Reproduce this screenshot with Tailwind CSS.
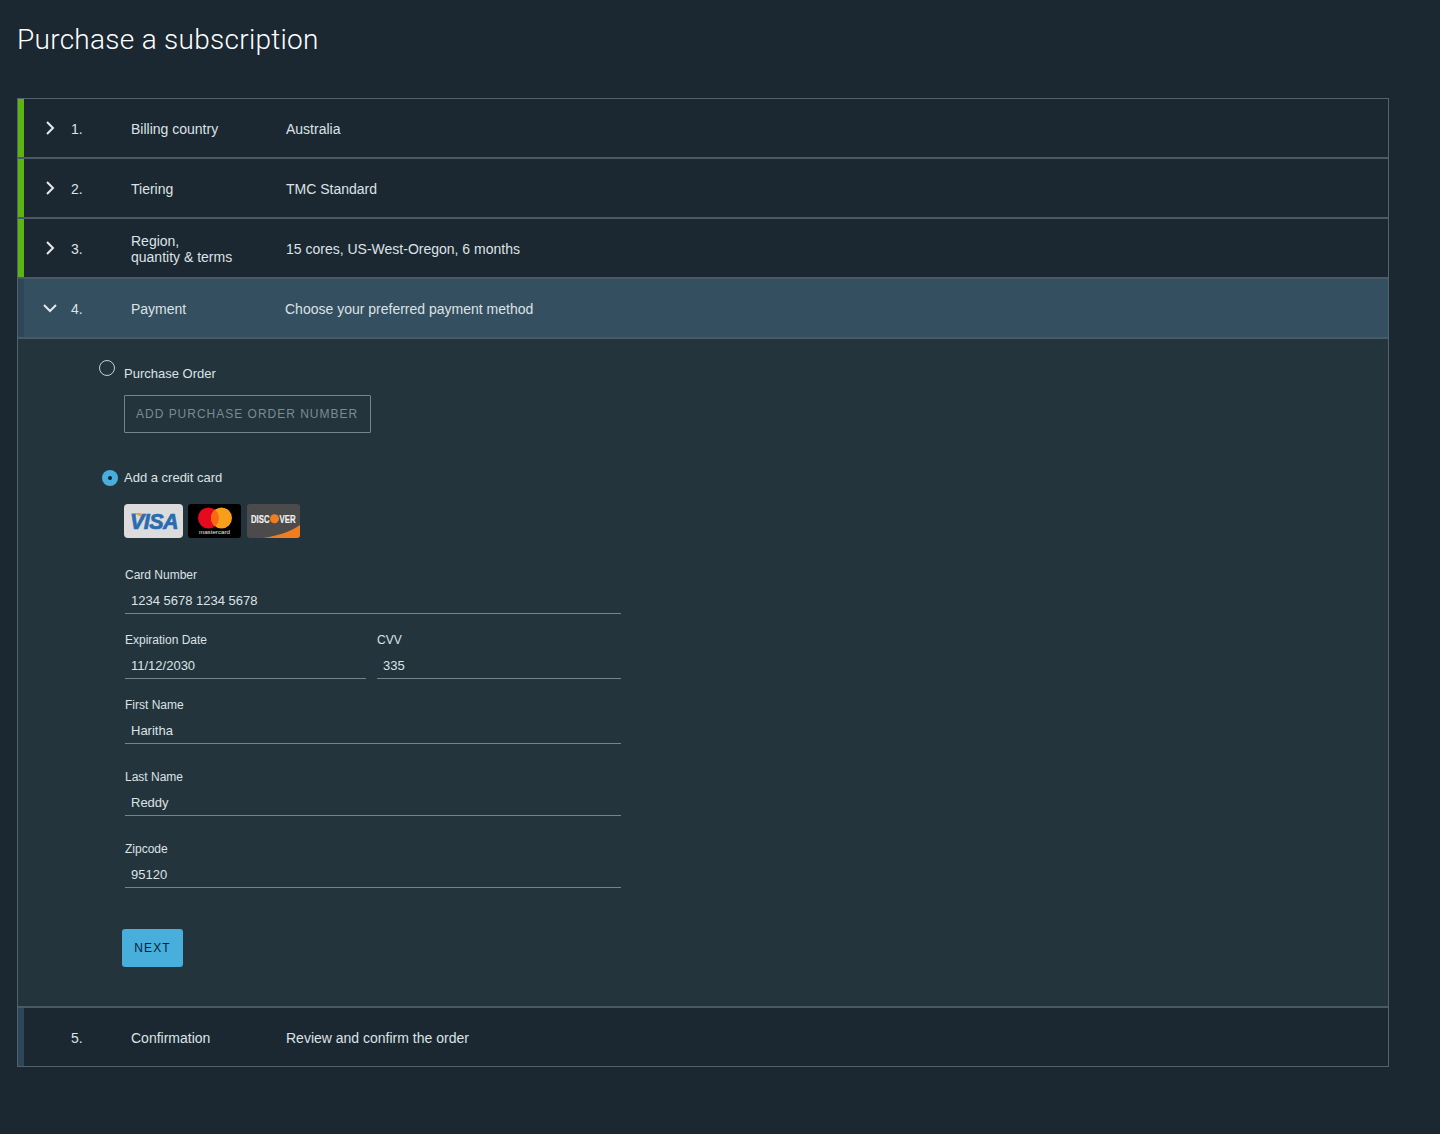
<!DOCTYPE html>
<html lang="en">

<head>
  <meta charset="UTF-8" />
  <title>Purchase a subscription</title>
  <script src="https://cdn.jsdelivr.net/npm/@tailwindcss/browser@4"></script>
</head>

<body class="bg-[#1b2832] font-['Liberation_Sans',Arial,sans-serif] text-[#dde2e5] h-[1134px] overflow-hidden">
  <div class="pl-[17px] pr-[51px]">
    <h1 class="h-[98px] pt-[22px] font-['Roboto',sans-serif] font-light text-[28px] leading-[36px] tracking-[0.28px] text-white">Purchase a subscription</h1>

    <div class="border border-[#52636d]">
      <!-- step 1 -->
      <div class="flex h-[60px] border-b-2 border-[#4a5a64] text-[14px]">
        <div class="w-[6px] bg-[#5cb314]"></div>
        <div class="flex flex-1 pt-[2px]">
          <div class="w-[47px] flex items-center pl-[21px]">
            <svg class="w-[10px] h-[14px] -mt-[2px]" viewBox="0 0 10 14" fill="none" stroke="#e6e9eb" stroke-width="2"><path d="M2 1l6 6-6 6" /></svg>
          </div>
          <div class="w-[60px] flex items-center">1.</div>
          <div class="w-[155px] flex items-center">Billing country</div>
          <div class="flex items-center">Australia</div>
        </div>
      </div>
      <!-- step 2 -->
      <div class="flex h-[60px] border-b-2 border-[#4a5a64] text-[14px]">
        <div class="w-[6px] bg-[#5cb314]"></div>
        <div class="flex flex-1 pt-[2px]">
          <div class="w-[47px] flex items-center pl-[21px]">
            <svg class="w-[10px] h-[14px] -mt-[2px]" viewBox="0 0 10 14" fill="none" stroke="#e6e9eb" stroke-width="2"><path d="M2 1l6 6-6 6" /></svg>
          </div>
          <div class="w-[60px] flex items-center">2.</div>
          <div class="w-[155px] flex items-center">Tiering</div>
          <div class="flex items-center">TMC Standard</div>
        </div>
      </div>
      <!-- step 3 -->
      <div class="flex h-[60px] border-b-2 border-[#4a5a64] text-[14px]">
        <div class="w-[6px] bg-[#5cb314]"></div>
        <div class="flex flex-1 pt-[2px]">
          <div class="w-[47px] flex items-center pl-[21px]">
            <svg class="w-[10px] h-[14px] -mt-[2px]" viewBox="0 0 10 14" fill="none" stroke="#e6e9eb" stroke-width="2"><path d="M2 1l6 6-6 6" /></svg>
          </div>
          <div class="w-[60px] flex items-center">3.</div>
          <div class="w-[155px] flex items-center leading-[16px]">Region,<br />quantity &amp; terms</div>
          <div class="flex items-center">15 cores, US-West-Oregon, 6 months</div>
        </div>
      </div>
      <!-- step 4 -->
      <div class="flex h-[60px] border-b-2 border-[#4a5a64] bg-[#334f60] text-[14px]">
        <div class="w-[6px] bg-[#2d4658]"></div>
        <div class="flex flex-1 pt-[2px]">
          <div class="w-[47px] flex items-center pl-[19px]">
            <svg class="w-[14px] h-[10px] -mt-[3px]" viewBox="0 0 14 10" fill="none" stroke="#e6e9eb" stroke-width="2"><path d="M1 2l6 6 6-6" /></svg>
          </div>
          <div class="w-[60px] flex items-center">4.</div>
          <div class="w-[154px] flex items-center">Payment</div>
          <div class="flex items-center">Choose your preferred payment method</div>
        </div>
      </div>

      <!-- payment panel -->
      <div class="h-[667px] bg-[#23343d] pl-[81px] pt-[21px] text-[13px]">
        <div class="flex">
          <div class="w-[16px] h-[16px] rounded-full border border-[#c9d0d4]"></div>
          <div class="ml-[9px] mt-[6px] leading-[16px]">Purchase Order</div>
        </div>
        <div class="ml-[25px] mt-[13px] w-[247px] h-[38px] border border-[#75858e] rounded-[1px] flex items-center pl-[11px] text-[12px] tracking-[0.99px] text-[#7b8a93]">ADD PURCHASE ORDER NUMBER</div>

        <div class="flex items-center mt-[37px] ml-[3px]">
          <div class="w-[16px] h-[16px] rounded-full bg-[#48aedc] flex items-center justify-center">
            <div class="w-[4px] h-[4px] rounded-full bg-[#10222c]"></div>
          </div>
          <div class="ml-[6px] leading-[16px]">Add a credit card</div>
        </div>

        <!-- card logos -->
        <div class="flex ml-[25px] mt-[18px] h-[34px]">
          <svg class="w-[59px] h-[34px]" viewBox="0 0 59 34">
            <rect width="59" height="34" rx="4" fill="#dcdcdc" />
            <path d="M6 9h10c2 0 3 1 3.500 3l1 5c-2-4-7-7-14.500-8z" fill="#e5a03a" />
            <text x="30" y="24.500" text-anchor="middle" font-family="Liberation Sans" font-weight="700" font-style="italic" font-size="21.500" letter-spacing="-0.5" fill="#2a6cb0" stroke="#2a6cb0" stroke-width="0.7">VISA</text>
          </svg>
          <svg class="w-[53px] h-[34px] ml-[5px]" viewBox="0 0 53 34">
            <rect width="53" height="34" rx="3" fill="#000" />
            <circle cx="20.500" cy="14" r="10.500" fill="#e60a1f" />
            <circle cx="33.500" cy="14" r="10.500" fill="#f79e1b" />
            <path d="M27 5.800a10.500 10.500 0 0 1 0 16.400a10.500 10.500 0 0 1 0-16.400z" fill="#fb6a12" />
            <text x="26.500" y="30" text-anchor="middle" font-family="Liberation Sans" font-size="6.200" fill="#e8e8e8">mastercard</text>
          </svg>
          <svg class="w-[53px] h-[34px] ml-[6px]" viewBox="0 0 53 34">
            <rect width="53" height="34" rx="3" fill="#4b4b4b" />
            <path d="M16 34c14-2 27-6 37-13v10a3 3 0 0 1-3 3z" fill="#f07e1e" />
            <text x="4" y="18.500" font-family="Liberation Sans" font-weight="700" font-size="10.500" textLength="18.500" lengthAdjust="spacingAndGlyphs" fill="#f1f1f1" stroke="#f1f1f1" stroke-width="0.2">DISC</text>
            <circle cx="27.500" cy="14.700" r="4.500" fill="#f07e1e" />
            <text x="32.500" y="18.500" font-family="Liberation Sans" font-weight="700" font-size="10.500" textLength="16" lengthAdjust="spacingAndGlyphs" fill="#f1f1f1" stroke="#f1f1f1" stroke-width="0.2">VER</text>
          </svg>
        </div>

        <!-- card fields -->
        <div class="ml-[26px] mt-[29px] w-[496px] text-[12px]">
          <div class="h-[65px]">
            <div class="leading-[16px]">Card Number</div>
            <div class="mt-[6px] h-[25px] pl-[6px] border-b border-[#75848c] text-[13px] leading-[24px]">1234 5678 1234 5678</div>
          </div>
          <div class="flex gap-[11px] h-[65px]">
            <div class="w-[241px]">
              <div class="leading-[16px]">Expiration Date</div>
              <div class="mt-[6px] h-[25px] pl-[6px] border-b border-[#75848c] text-[13px] leading-[24px]">11/12/2030</div>
            </div>
            <div class="w-[244px]">
              <div class="leading-[16px]">CVV</div>
              <div class="mt-[6px] h-[25px] pl-[6px] border-b border-[#75848c] text-[13px] leading-[24px]">335</div>
            </div>
          </div>
          <div class="h-[72px]">
            <div class="leading-[16px]">First Name</div>
            <div class="mt-[6px] h-[25px] pl-[6px] border-b border-[#75848c] text-[13px] leading-[24px]">Haritha</div>
          </div>
          <div class="h-[72px]">
            <div class="leading-[16px]">Last Name</div>
            <div class="mt-[6px] h-[25px] pl-[6px] border-b border-[#75848c] text-[13px] leading-[24px]">Reddy</div>
          </div>
          <div class="h-[88px]">
            <div class="leading-[16px]">Zipcode</div>
            <div class="mt-[6px] h-[25px] pl-[6px] border-b border-[#75848c] text-[13px] leading-[24px]">95120</div>
          </div>
        </div>

        <button class="ml-[23px] w-[61px] h-[38px] rounded-[3px] bg-[#48aedc] text-[#0a2233] text-[12px] tracking-[1.1px]">NEXT</button>
      </div>

      <!-- step 5 -->
      <div class="flex h-[60px] border-t-2 border-[#4a5a64] text-[14px]">
        <div class="w-[6px] bg-[#2d4658]"></div>
        <div class="flex flex-1 pt-[2px]">
          <div class="w-[47px]"></div>
          <div class="w-[60px] flex items-center">5.</div>
          <div class="w-[155px] flex items-center">Confirmation</div>
          <div class="flex items-center">Review and confirm the order</div>
        </div>
      </div>
    </div>
  </div>
</body>

</html>
